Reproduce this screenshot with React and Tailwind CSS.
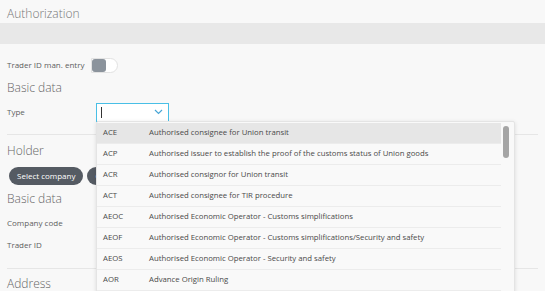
import React from "react";

const items = [
  ["ACE", "Authorised consignee for Union transit"],
  ["ACP", "Authorised issuer to establish the proof of the customs status of Union goods"],
  ["ACR", "Authorised consignor for Union transit"],
  ["ACT", "Authorised consignee for TIR procedure"],
  ["AEOC", "Authorised Economic Operator - Customs simplifications"],
  ["AEOF", "Authorised Economic Operator - Customs simplifications/Security and safety"],
  ["AEOS", "Authorised Economic Operator - Security and safety"],
  ["AOR", "Advance Origin Ruling"],
];

export default function App() {
  return (
    <div
      className="relative w-[545px] h-[291px] overflow-hidden bg-[#f8f8f8] text-[#555]"
      style={{ fontFamily: '"Open Sans", sans-serif' }}
    >
      <div className="px-[7px] pt-[5px] h-[23px] text-[12px] font-light text-[#777] leading-[18px]">
        Authorization
      </div>
      <div className="h-[21px] bg-[#e8e8e8]" />
      <div className="px-[7px]">
        <div className="flex items-center h-[16px] mt-[13px]">
          <div className="w-[84px] whitespace-nowrap text-[8px] text-[#5e5e5e]">Trader ID man. entry</div>
          <div className="flex w-[27px] h-[15px] rounded-r-full border border-[#e2e2e2] bg-white">
            <div className="w-[14px] h-full rounded-[3px] bg-[#8b939c]" />
          </div>
        </div>
        <div className="mt-[6px] h-[18px] text-[12px] font-light text-[#666] leading-[18px]">Basic data</div>
        <div className="flex items-center mt-[5px] h-[20px]">
          <div className="w-[89px] text-[8px] text-[#5e5e5e]">Type</div>
          <div className="flex items-center w-[73px] h-[19px] border border-[#49bfe6] bg-white px-[4px]">
            <div className="w-[1px] h-[11px] bg-[#333]" />
            <svg className="ml-auto mr-[1px]" width="9" height="6" viewBox="0 0 9 6">
              <path d="M1 1l3.5 3.5L8 1" fill="none" stroke="#49a6d6" strokeWidth="1.2" />
            </svg>
          </div>
        </div>
        <div className="mt-[12px] border-t border-[#e6e6e6]" />
        <div className="mt-[6px] h-[20px] text-[12px] font-light text-[#666] leading-[20px]">Holder</div>
        <div className="flex gap-[4px] mt-[6px] ml-[2px]">
          <div className="h-[18px] px-[8px] rounded-full bg-[#555b63] text-white text-[8px] leading-[18px]">
            Select company
          </div>
          <div className="h-[18px] px-[8px] rounded-full bg-[#555b63] text-white text-[8px] leading-[18px]">
            Clear
          </div>
        </div>
        <div className="mt-[5px] h-[18px] text-[12px] font-light text-[#666] leading-[18px]">Basic data</div>
        <div className="mt-[8px] h-[14px] text-[8px] text-[#5e5e5e] leading-[14px]">Company code</div>
        <div className="mt-[8px] h-[14px] text-[8px] text-[#5e5e5e] leading-[14px]">Trader ID</div>
        <div className="mt-[16px] border-t border-[#e6e6e6]" />
        <div className="mt-[5px] text-[12px] font-light text-[#666] leading-[20px]">Address</div>
      </div>

      <div className="absolute left-[96px] top-[121px] w-[419px] h-[190px] bg-[#f9f9f9] border border-[#e4e4e4] rounded-[2px] shadow-[0_1px_4px_rgba(0,0,0,0.12)]">
        <div className="pr-[13px] pt-[1px]">
          {items.map(([code, desc], i) => (
            <div
              key={code}
              className={
                "flex items-center h-[21px] text-[7.75px] text-[#4a4a4a] border-b border-[#ececec] " +
                (i === 0 ? "bg-[#e6e6e6]" : "")
              }
            >
              <div className="w-[52px] pl-[6px]">{code}</div>
              <div className="whitespace-nowrap">{desc}</div>
            </div>
          ))}
        </div>
        <div className="absolute right-[5px] top-[4px] w-[6px] h-[32px] rounded-full bg-[#a5a5a5]" />
      </div>
    </div>
  );
}
